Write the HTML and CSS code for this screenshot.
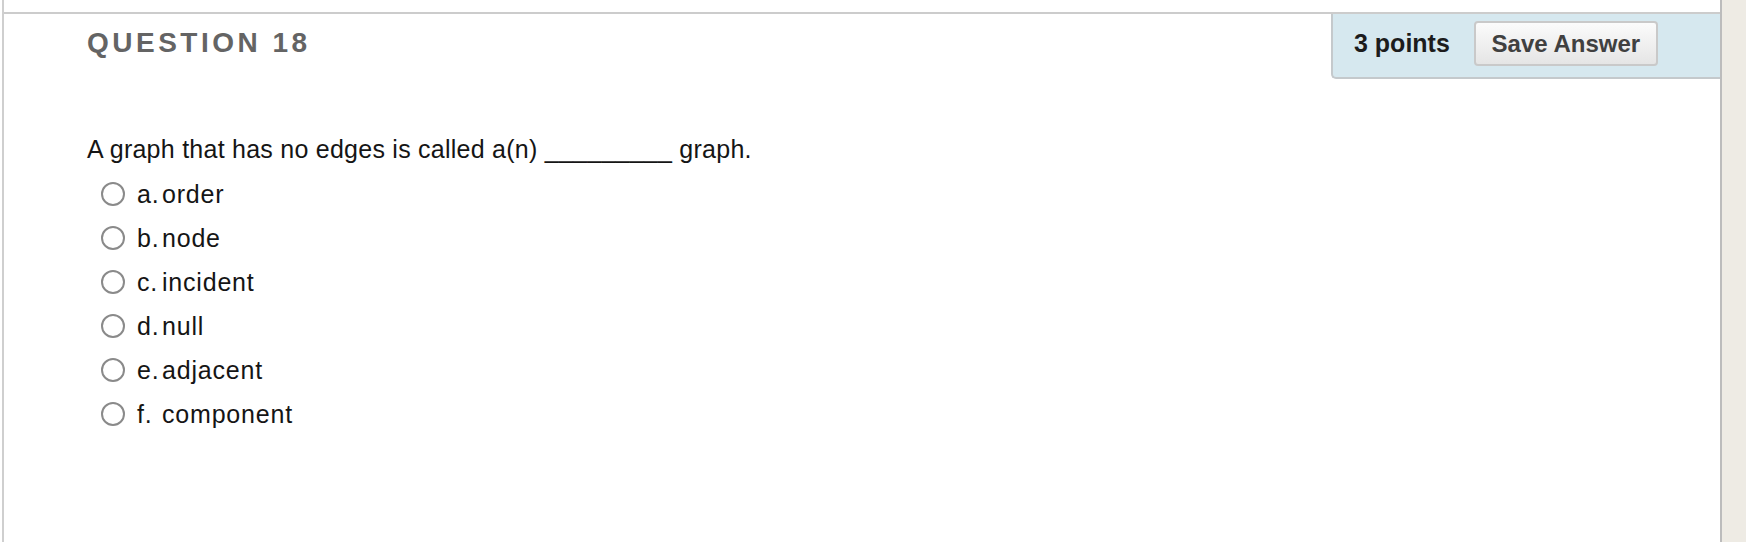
FILE: index.html
```html
<!DOCTYPE html>
<html lang="en">
<head>
<meta charset="utf-8">
<title>Question 18</title>
<link rel="stylesheet" href="styles.css">
</head>
<body>
<div class="page">
  <div class="main">
    <div class="question">
      <div class="q-head">
        <h2 class="q-title">QUESTION 18</h2>
        <div class="q-points">
          <span class="points">3 points</span>
          <button class="save-btn" type="button">Save Answer</button>
        </div>
      </div>
      <div class="q-body">
        <p class="q-text">A graph that has no edges is called a(n) _________ graph.</p>
        <ul class="options">
          <li class="option"><span class="radio"></span><span class="num">a.</span><span class="label">order</span></li>
          <li class="option"><span class="radio"></span><span class="num">b.</span><span class="label">node</span></li>
          <li class="option"><span class="radio"></span><span class="num">c.</span><span class="label">incident</span></li>
          <li class="option"><span class="radio"></span><span class="num">d.</span><span class="label">null</span></li>
          <li class="option"><span class="radio"></span><span class="num">e.</span><span class="label">adjacent</span></li>
          <li class="option"><span class="radio"></span><span class="num">f.</span><span class="label">component</span></li>
        </ul>
      </div>
    </div>
  </div>
  <div class="gutter"></div>
</div>
</body>
</html>
```

FILE: styles.css
```css
* { box-sizing: border-box; }

html, body {
  margin: 0;
  padding: 0;
  background: #ffffff;
  font-family: "Liberation Sans", Arial, Helvetica, sans-serif;
  color: #1a1a1a;
}

.page {
  display: flex;
  width: 1746px;
  height: 542px;
  padding-left: 2px;
  background: #ffffff;
}

.main {
  flex: 1;
  border-left: 2px solid #cfcfcf;
  padding-top: 12px;
  background: #ffffff;
}

.question {
  border-top: 2px solid #cccccc;
}

.q-head {
  display: flex;
  justify-content: space-between;
  align-items: flex-start;
}

.q-title {
  margin: 15px 0 0 83px;
  font-size: 28px;
  line-height: 28px;
  font-weight: bold;
  letter-spacing: 3.5px;
  color: #646464;
}

.q-points {
  display: flex;
  align-items: baseline;
  gap: 24px;
  width: 389px;
  height: 65px;
  padding: 7px 0 0 21px;
  background: #d6e8ef;
  border-left: 2px solid #c4c9cc;
  border-bottom: 2px solid #c4c9cc;
  border-bottom-left-radius: 5px;
}

.points {
  font-size: 25px;
  font-weight: bold;
  color: #1c1c1c;
}

.save-btn {
  width: 184px;
  height: 45px;
  padding: 0;
  font-family: "Liberation Sans", Arial, Helvetica, sans-serif;
  font-size: 24px;
  font-weight: bold;
  color: #404040;
  background: linear-gradient(#fbfbfb, #e5e5e5);
  border: 2px solid #c9c9c9;
  border-radius: 4px;
}

.q-body {
  padding-left: 83px;
}

.q-text {
  margin: 55px 0 0 0;
  font-size: 25px;
  line-height: 30px;
  letter-spacing: 0.25px;
  color: #151515;
}

.options {
  list-style: none;
  margin: 8px 0 0 0;
  padding: 0 0 0 14px;
}

.option {
  display: flex;
  align-items: center;
  height: 44px;
  font-size: 25px;
  letter-spacing: 0.8px;
  color: #151515;
}

.radio {
  width: 24px;
  height: 24px;
  border: 2px solid #8a8a8a;
  border-radius: 50%;
  background: #ffffff;
  margin-right: 12px;
  flex: none;
}

.num {
  width: 25px;
  flex: none;
}

.gutter {
  width: 26px;
  background: #eeebe4;
  border-left: 2px solid #bcbcbc;
}
```
